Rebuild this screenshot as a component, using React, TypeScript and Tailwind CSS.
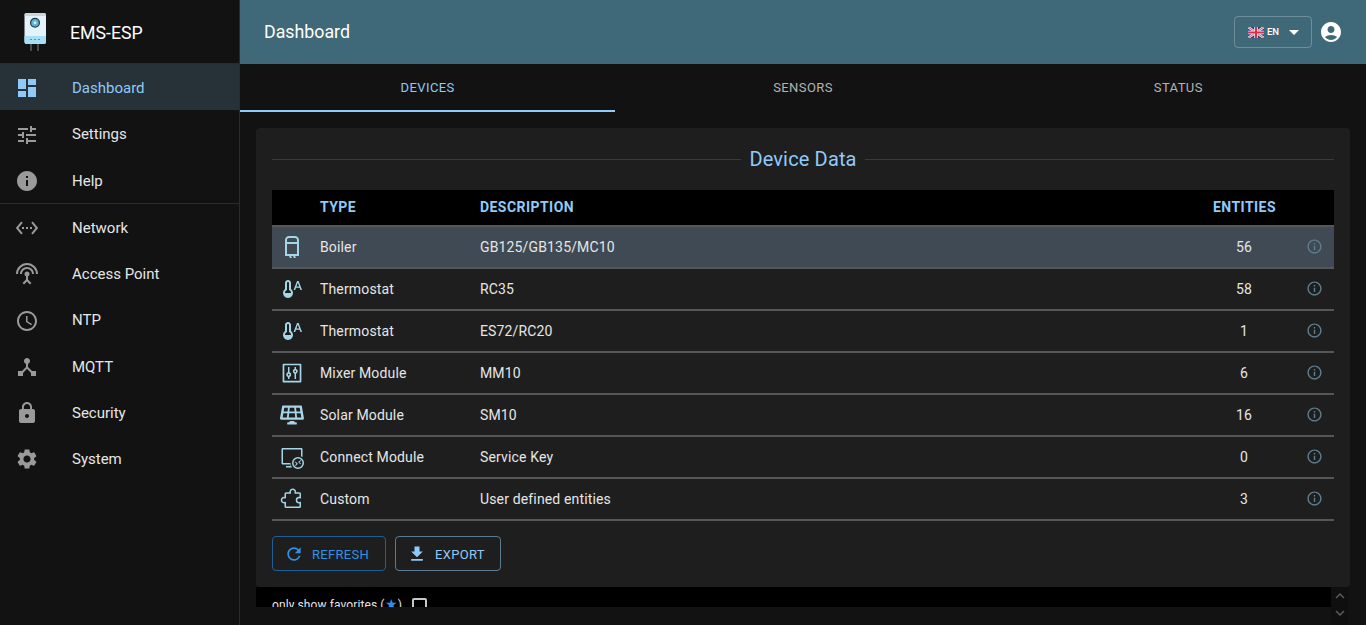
import type { ComponentType, ReactNode } from 'react';
import { PiPuzzlePiece } from 'react-icons/pi';
import { AiOutlineControl } from 'react-icons/ai';
import { CgSmartHomeBoiler } from 'react-icons/cg';
import { FaSolarPanel } from 'react-icons/fa';
import { VscVmConnect } from 'react-icons/vsc';
import {
  MdAccessTime,
  MdAccountCircle,
  MdArrowDropDown,
  MdDashboard,
  MdDeviceHub,
  MdFileDownload,
  MdInfo,
  MdInfoOutline,
  MdKeyboardArrowDown,
  MdKeyboardArrowUp,
  MdLock,
  MdRefresh,
  MdSettings,
  MdSettingsEthernet,
  MdSettingsInputAntenna,
  MdThermostatAuto,
  MdTune,
} from 'react-icons/md';

type Icon = ComponentType<{ size?: number; className?: string }>;

const topNav: { label: string; icon: Icon; active?: boolean }[] = [
  { label: 'Dashboard', icon: MdDashboard, active: true },
  { label: 'Settings', icon: MdTune },
  { label: 'Help', icon: MdInfo },
];

const bottomNav: { label: string; icon: Icon }[] = [
  { label: 'Network', icon: MdSettingsEthernet },
  { label: 'Access Point', icon: MdSettingsInputAntenna },
  { label: 'NTP', icon: MdAccessTime },
  { label: 'MQTT', icon: MdDeviceHub },
  { label: 'Security', icon: MdLock },
  { label: 'System', icon: MdSettings },
];

const devices: { type: string; name: string; entities: number; icon: Icon; selected?: boolean }[] = [
  { type: 'Boiler', name: 'GB125/GB135/MC10', entities: 56, icon: CgSmartHomeBoiler, selected: true },
  { type: 'Thermostat', name: 'RC35', entities: 58, icon: MdThermostatAuto },
  { type: 'Thermostat', name: 'ES72/RC20', entities: 1, icon: MdThermostatAuto },
  { type: 'Mixer Module', name: 'MM10', entities: 6, icon: AiOutlineControl },
  { type: 'Solar Module', name: 'SM10', entities: 16, icon: FaSolarPanel },
  { type: 'Connect Module', name: 'Service Key', entities: 0, icon: VscVmConnect },
  { type: 'Custom', name: 'User defined entities', entities: 3, icon: PiPuzzlePiece },
];

const Logo = () => (
  <svg width="30" height="42" viewBox="0 0 30 42" className="shrink-0">
    <path d="M11 33v7M18 33v7" stroke="#4a4a4a" strokeWidth="2" />
    <rect x="4.5" y="2" width="21.5" height="31" rx="2.5" fill="#e4f3fb" />
    <rect x="4.5" y="2" width="21.5" height="3" rx="1.5" fill="#c9d6dd" />
    <path d="M4.5 25h21.5v5.5a2.5 2.5 0 0 1-2.5 2.5H7a2.5 2.5 0 0 1-2.5-2.5z" fill="#a6dff5" />
    <circle cx="15" cy="11.7" r="4.4" fill="#5fb4d6" stroke="#1d3a48" strokeWidth="1.2" />
    <circle cx="15" cy="11.7" r="1.3" fill="#e4f3fb" />
    <path d="M10 28.5h2M14 28.5h2M18 28.5h2" stroke="#5d8ea3" strokeWidth="1" />
  </svg>
);

const Flag = () => (
  <svg width="16" height="11" viewBox="0 0 16 11" className="shrink-0">
    <rect width="16" height="11" fill="#2c3f8c" />
    <path d="M0 0l16 11M16 0L0 11" stroke="#f3e4ea" strokeWidth="2.4" />
    <path d="M0 0l16 11M16 0L0 11" stroke="#d8324a" strokeWidth="0.8" />
    <path d="M8 0v11M0 5.5h16" stroke="#f3e4ea" strokeWidth="3.6" />
    <path d="M8 0v11M0 5.5h16" stroke="#d8324a" strokeWidth="2" />
  </svg>
);

const NavItem = ({ label, icon: Ico, active }: { label: string; icon: Icon; active?: boolean }) => (
  <div className={`flex h-[46.25px] items-center pl-[15px] pt-[2.7px] ${active ? 'bg-[#263238] text-[#90caf9]' : 'text-[#e6e6e6]'}`}>
    <Ico size={24} className={active ? 'text-[#90caf9]' : 'text-[#9a9a9a]'} />
    <span className="ml-[33px] text-[15px]">{label}</span>
  </div>
);

const OutlineButton = ({ children, className }: { children: ReactNode; className: string }) => (
  <button className={`flex h-[35px] items-center rounded border text-[13px] tracking-[0.3px] ${className}`}>{children}</button>
);

export default function App() {
  return (
    <div className="flex h-screen overflow-hidden bg-[#121212] font-['Roboto',sans-serif] text-white">
      <aside className="w-[240px] shrink-0 border-r border-[#2b2b2b]">
        <div className="flex h-[64px] items-center border-b border-[#2b2b2b] pl-[20px]">
          <Logo />
          <span className="ml-[20px] pt-[3px] text-[17.7px] font-normal">EMS-ESP</span>
        </div>
        {topNav.map((item) => (
          <NavItem key={item.label} {...item} />
        ))}
        <div className="border-t border-[#2b2b2b]">
          {bottomNav.map((item) => (
            <NavItem key={item.label} {...item} />
          ))}
        </div>
      </aside>

      <div className="flex min-w-0 flex-1 flex-col">
        <header className="flex h-[64px] shrink-0 items-center bg-[#3f6878] pl-[24px] pr-[23px]">
          <h1 className="text-[17.8px] font-normal">Dashboard</h1>
          <div className="ml-auto flex items-center">
            <div className="flex h-[32px] w-[78px] items-center rounded border border-[#ffffff40] pl-[13px]">
              <Flag />
              <span className="ml-[3px] text-[9.5px] font-medium">EN</span>
              <MdArrowDropDown size={24} className="ml-[2.5px]" />
            </div>
            <MdAccountCircle size={24} className="ml-[7px]" />
          </div>
        </header>

        <nav className="grid h-[48px] shrink-0 grid-cols-3 text-[13px] font-normal uppercase tracking-[0.4px] text-[#b3b3b3]">
          <div className="flex items-center justify-center border-b-2 border-[#90caf9] pt-[2px] text-[#90caf9]">Devices</div>
          <div className="flex items-center justify-center">Sensors</div>
          <div className="flex items-center justify-center">Status</div>
        </nav>

        <main className="relative mb-[18px] ml-[16px] mr-[16px] mt-[16px] min-h-0 flex-1 overflow-hidden">
          <section className="rounded bg-[#1e1e1e] px-[16px] pb-[16px] pt-[16px]">
            <div className="flex h-[30px] items-center">
              <div className="h-px flex-1 bg-[#3a3a3a]" />
              <h2 className="px-[8px] text-[20px] font-normal tracking-[0.15px] text-[#90caf9]">Device Data</h2>
              <div className="h-px flex-1 bg-[#3a3a3a]" />
            </div>

            <div className="mt-[16px] text-[14px] tracking-[0.15px]">
              <div className="flex h-[37px] items-center border-b-2 border-[#565656] bg-black font-bold tracking-[0.45px] text-[#90caf9]">
                <span className="w-[208px] pl-[48px]">TYPE</span>
                <span className="flex-1">DESCRIPTION</span>
                <span className="w-[121px]">ENTITIES</span>
              </div>
              {devices.map((d, i) => {
                const Ico = d.icon;
                return (
                  <div
                    key={i}
                    className={`flex h-[42px] items-center border-b-2 border-[#565656] text-[#e6e6e6] ${d.selected ? 'bg-[#3f4a54]' : ''}`}
                  >
                    <span className="flex w-[40px] justify-center">
                      <Ico size={24} className="text-[#a5d6e8]" />
                    </span>
                    <span className="ml-[8px] w-[160px]">{d.type}</span>
                    <span className="flex-1">{d.name}</span>
                    <span className="w-[60px] text-center">{d.entities}</span>
                    <span className="flex w-[60px] justify-end pb-[1px] pr-[11px]">
                      <MdInfoOutline size={17} className="text-[#5d7f8f]" />
                    </span>
                  </div>
                );
              })}
            </div>

            <div className="mt-[15px] flex gap-[9px]">
              <OutlineButton className="w-[114px] border-[#1f5f96] pl-[11px] text-[#3092e6]">
                <MdRefresh size={20} />
                <span className="ml-[8px] pt-[2px]">REFRESH</span>
              </OutlineButton>
              <OutlineButton className="w-[106px] border-[#5a7b92] pl-[11px] text-[#90caf9]">
                <MdFileDownload size={20} />
                <span className="ml-[8px] pt-[2px]">EXPORT</span>
              </OutlineButton>
            </div>
          </section>

          <div className="flex h-[40px] w-[1075px] items-start bg-black pl-[16px] pt-[9px] text-[12px] tracking-[0.1px] text-[#e6e6e6]">
            <span>only show favorites (</span>
            <span className="text-[14px] leading-[16px] text-[#2f8fe0]">★</span>
            <span>)</span>
            <span className="ml-[10px] mt-[2px] h-[15px] w-[15px] rounded-[2px] border-2 border-[#c8c8c8]" />
          </div>
        </main>

        <div className="pointer-events-none absolute left-[1331px] top-[587px] flex h-[38px] w-[17px] flex-col items-center bg-[#0f0f0f] text-[#5c5c5c]">
          <MdKeyboardArrowUp size={18} />
          <MdKeyboardArrowDown size={18} className="mt-[-1px]" />
        </div>
      </div>
    </div>
  );
}
